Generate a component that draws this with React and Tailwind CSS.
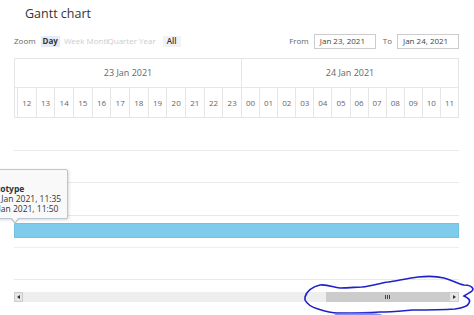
import React from 'react';

const leftHours = ['12', '13', '14', '15', '16', '17', '18', '19', '20', '21', '22', '23'];
const rightHours = ['00', '01', '02', '03', '04', '05', '06', '07', '08', '09', '10', '11'];

function HourCells({ hours }) {
  return (
    <div className="grid grid-cols-12 h-full">
      {hours.map((h) => (
        <div key={h} className="flex items-center justify-center border-l border-[#e6e6e6] text-[8px] text-[#666]">
          {h}
        </div>
      ))}
    </div>
  );
}

export default function App() {
  return (
    <div
      className="relative w-[474px] h-[315px] overflow-hidden bg-white"
      style={{ fontFamily: '"Open Sans", "Noto Sans", sans-serif' }}
    >
      {/* title */}
      <div className="pl-[25px] pt-[5px] h-[34px] text-[12.5px] text-[#333]">Gantt chart</div>

      {/* toolbar */}
      <div className="flex items-center h-[14px] pl-[14px] pr-[15px] text-[8px]">
        <span className="text-[#666] mr-[5px]">Zoom</span>
        <span className="flex items-center h-[11px] px-[2px] bg-[#e6ebf5] font-bold text-[#333]">Day</span>
        <span className="ml-[4px] text-[#cccccc]">Week</span>
        <span className="ml-[2px] text-[#cccccc] w-[21px] overflow-hidden whitespace-nowrap">Month</span>
        <span className="text-[#cccccc]">Quarter</span>
        <span className="ml-[2px] text-[#cccccc]">Year</span>
        <span className="ml-[7px] flex items-center justify-center h-[11px] w-[18px] bg-[#f2f2f2] font-semibold text-[#333]">All</span>
        <div className="flex-1" />
        <span className="text-[#666] mr-[5px]">From</span>
        <span className="flex items-center h-[15px] w-[62px] pl-[5px] border border-[#cccccc] text-[#444]">Jan 23, 2021</span>
        <span className="text-[#666] ml-[7px] mr-[5px]">To</span>
        <span className="flex items-center h-[15px] w-[62px] pl-[5px] border border-[#cccccc] text-[#444]">Jan 24, 2021</span>
      </div>

      {/* chart */}
      <div className="ml-[14px] mt-[10px] w-[445px]">
        <div className="border border-[#e6e6e6]">
          <div className="flex h-[29px] border-b border-[#e6e6e6] text-[9px] text-[#666]">
            <div className="w-[226px] flex items-center justify-center">23 Jan 2021</div>
            <div className="flex-1 flex items-center justify-center border-l border-[#e6e6e6]">24 Jan 2021</div>
          </div>
          <div className="flex h-[29px]">
            <div className="w-[226px] pl-[2px]">
              <HourCells hours={leftHours} />
            </div>
            <div className="flex-1">
              <HourCells hours={rightHours} />
            </div>
          </div>
        </div>

        <div className="h-[33px] border-b border-[#e9e9e9]" />
        <div className="h-[32px] border-b border-[#e9e9e9]" />
        <div className="h-[33px] border-b border-[#efe6e3]" />
        <div className="h-[32px] border-b border-[#eeeeee] pt-[7px]">
          <div className="h-[15px] bg-[#7fcbeb] border border-[#74c1e2]" />
        </div>
        <div className="h-[32px] border-b border-[#e9e9e9]" />

        {/* scrollbar */}
        <div className="mt-[12px] flex h-[10px] bg-[#eeeeee]">
          <div className="w-[9px] flex items-center justify-center bg-[#e6e6e6] border border-[#cccccc]">
            <div className="w-0 h-0 border-y-[2px] border-y-transparent border-r-[3px] border-r-[#333]" />
          </div>
          <div className="flex-1" />
          <div className="w-[123px] flex items-center justify-center bg-[#cccccc] gap-[1px]">
            <div className="w-[1px] h-[4px] bg-[#444]" />
            <div className="w-[1px] h-[4px] bg-[#444]" />
            <div className="w-[1px] h-[4px] bg-[#444]" />
          </div>
          <div className="w-[10px] flex items-center justify-center bg-[#e6e6e6] border border-[#cccccc]">
            <div className="w-0 h-0 border-y-[2px] border-y-transparent border-l-[3px] border-l-[#333]" />
          </div>
        </div>
      </div>

      {/* tooltip */}
      <div className="absolute left-[-80px] top-[169px] w-[148px] h-[50px] bg-[#f9f9f9] border border-[#b9c6d3] rounded-[2px] shadow-[1px_1px_3px_rgba(0,0,0,0.15)] text-[8.5px] leading-[10px] text-[#333] whitespace-nowrap">
        <div className="pt-[14px] pl-[61px] font-bold">Prototype</div>
        <div className="pl-[45px]">Start: 23 Jan 2021, 11:35</div>
        <div className="pl-[46px]">End: 23 Jan 2021, 11:50</div>
        <div className="absolute left-[89px] bottom-[-6px] w-0 h-0 border-x-[5px] border-x-transparent border-t-[6px] border-t-[#b9c6d3]" />
        <div className="absolute left-[90px] bottom-[-4px] w-0 h-0 border-x-[4px] border-x-transparent border-t-[5px] border-t-[#f9f9f9]" />
      </div>

      {/* hand-drawn highlight */}
      <svg className="absolute left-0 top-0" width="474" height="315" viewBox="0 0 474 315">
        <path
          d="M305 297 C307 290 312 287 320 285 C328 284 334 288 340 288 C350 288 356 287 362 287 C372 286 380 283 388 282 C400 280 410 278 418 277 C428 276 436 276 444 278 C452 280 458 284 464 285 C468 285 472 286 473 289 C473 292 468 293 464 296 C468 298 471 300 469 303 C468 306 463 308 455 309 C440 310 425 310 412 310 C400 311 390 312 380 312 C365 313 350 313 338 313 C330 313 324 311 318 309 C311 307 307 304 305 300 Z"
          fill="none"
          stroke="#1e22c8"
          strokeWidth="1.6"
        />
        <ellipse cx="358" cy="315" rx="24" ry="2.5" fill="#6f72e6" opacity="0.8" />
      </svg>
    </div>
  );
}
